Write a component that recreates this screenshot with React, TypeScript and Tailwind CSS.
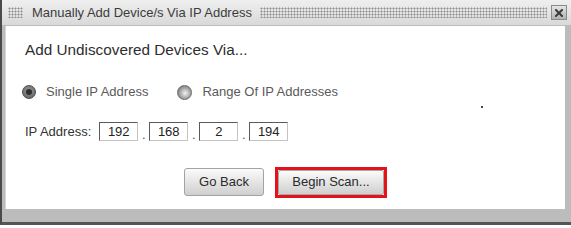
import React from "react";

const FONT = "font-['Liberation_Sans',Arial,Helvetica,sans-serif]";

const GRIP =
  "bg-[radial-gradient(circle,#8e8e8e_0.8px,transparent_1.2px)] bg-[length:3px_3px]";

// single IP octet box
function Octet({ value }: { value: string }) {
  return (
    <div className="w-[39px] h-[19px] flex items-center justify-center border border-t-[#5a5a5a] border-l-[#5a5a5a] border-r-[#c4c4c4] border-b-[#c4c4c4] bg-white text-[13px] text-[#222]">
      {value}
    </div>
  );
}

function Radio({ checked, label }: { checked: boolean; label: string }) {
  return (
    <div className="flex items-center">
      {checked ? (
        <span className="w-[14px] h-[14px] rounded-full border border-[#4d4d4d] bg-[radial-gradient(circle_at_50%_40%,#9a9a9a,#5a5a5a)] flex items-center justify-center">
          <span className="w-[6px] h-[6px] rounded-full bg-[#2e2e2e]" />
        </span>
      ) : (
        <span className="w-[15px] h-[15px] rounded-full border border-[#6a6a6a] bg-[radial-gradient(circle_at_55%_55%,#f2f2f2_0%,#bdbdbd_35%,#7a7a7a_80%)]" />
      )}
      <span className="ml-[10px] text-[13px] leading-[16px] text-[#5a5a5a]">{label}</span>
    </div>
  );
}

export default function App() {
  const octets = ["192", "168", "2", "194"];

  return (
    <div className={`w-[571px] h-[228px] bg-white ${FONT}`}>
      <div className="relative w-[571px] h-[225px] flex flex-col border-l-2 border-l-[#4a4a4a] border-b-[3px] border-b-[#555]">
        {/* TITLE BAR */}
        <div className="h-[26px] flex items-center bg-gradient-to-b from-[#efefef] to-[#d9d9d9] border-b border-[#bdbdbd] pl-[6px] pr-[4px]">
          <div className={`w-[15px] h-[11px] ${GRIP}`} />
          <span className="ml-[9px] text-[13px] text-[#3c3c3c] whitespace-nowrap">
            Manually Add Device/s Via IP Address
          </span>
          <div className={`ml-[8px] flex-1 h-[11px] ${GRIP}`} />
          <div className="ml-[4px] w-[16px] h-[15px] border border-[#8a8a8a] bg-gradient-to-b from-[#e4e4e4] to-[#b2b2b2] flex items-center justify-center">
            <svg width="8" height="8" viewBox="0 0 8 8">
              <path d="M1 1 L7 7 M7 1 L1 7" stroke="#3a3a3a" strokeWidth="2" strokeLinecap="square" />
            </svg>
          </div>
        </div>

        {/* BODY FRAME */}
        <div className="flex-1 flex flex-col bg-[#bcbcbc]">
          <div className="flex-1 flex flex-col bg-white ml-[3px] mr-[6px] mb-[13px] border-l border-[#d6d6d6]">
            <h1 className="mt-[14px] pl-[19px] text-[15.3px] leading-[20px] text-[#2e2e2e]">
              Add Undiscovered Devices Via...
            </h1>

            <div className="mt-[24px] pl-[16px] flex items-center gap-[29px]">
              <Radio checked label="Single IP Address" />
              <Radio checked={false} label="Range Of IP Addresses" />
            </div>

            <div className="mt-[22px] pl-[19px] flex items-center">
              <span className="text-[13px] text-[#333] mr-[8px]">IP Address:</span>
              {octets.map((o, i) => (
                <React.Fragment key={i}>
                  {i > 0 && (
                    <span className="w-[11px] text-center text-[13px] text-[#555] leading-none pt-[6px]">.</span>
                  )}
                  <Octet value={o} />
                </React.Fragment>
              ))}
            </div>

            <div className="mt-[25px] flex items-center justify-center gap-[11px]">
              <button
                type="button"
                className="w-[80px] h-[28px] rounded-[3px] border border-[#a3a3a3] bg-gradient-to-b from-[#fbfbfb] to-[#cfcfcf] text-[13px] text-[#2a2a2a]"
              >
                Go Back
              </button>
              <div className="border-[3px] border-[#e3121b]">
                <button
                  type="button"
                  className="w-[106px] h-[25px] rounded-[2px] border border-[#a8a8a8] bg-gradient-to-b from-[#fbfbfb] to-[#cfcfcf] text-[13px] text-[#2a2a2a] block"
                >
                  Begin Scan...
                </button>
              </div>
            </div>
          </div>
        </div>

        {/* stray speck in the screenshot */}
        <span className="absolute left-[479px] top-[106px] w-[2px] h-[2px] bg-[#444]" />
      </div>
    </div>
  );
}
